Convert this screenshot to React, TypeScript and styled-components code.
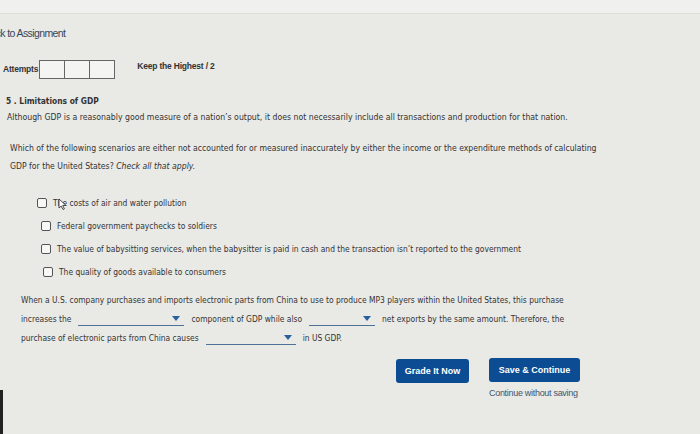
import React from "react";
import styled, { createGlobalStyle } from "styled-components";

const Global = createGlobalStyle`
  html, body { margin: 0; padding: 0; }
  body {
    background: #e9e9e6;
    width: 700px;
    height: 434px;
    overflow: hidden;
    font-family: "DejaVu Sans", "Liberation Sans", sans-serif;
    font-stretch: condensed;
    color: #2e2e2e;
  }
`;

const Page = styled.div`
  position: relative;
  width: 700px;
  height: 434px;
  display: flex;
  flex-direction: column;
`;

const TopBand = styled.div`
  height: 13px;
  background: #f0f0ee;
  border-bottom: 1px solid #dcdcd8;
`;

const BackLink = styled.a`
  margin: 12px 0 0 -16px;
  font-family: "Liberation Sans", Arial, sans-serif;
  font-stretch: normal;
  font-size: 10.5px;
  line-height: 14px;
  letter-spacing: -0.6px;
  color: #3b4656;
  text-decoration: none;
`;

const AttemptsRow = styled.div`
  margin: 20px 0 0 3px;
  display: flex;
  align-items: center;
  height: 18px;
`;

const SmallBold = styled.span`
  font-family: "Liberation Sans", Arial, sans-serif;
  font-stretch: normal;
  font-size: 8.5px;
  font-weight: bold;
  letter-spacing: -0.2px;
  color: #333;
`;

const Boxes = styled.div`
  display: flex;
  margin-left: 1px;
  border: 1px solid #666;
  height: 17px;
  background: #f4f4f2;
`;

const Box = styled.div`
  width: 24px;
  & + & { border-left: 1px solid #666; }
`;

const Keep = styled(SmallBold)`
  margin-left: 22px;
  margin-top: -6px;
`;

const Title = styled.div`
  margin: 17px 0 0 6px;
  font-size: 8.4px;
  font-weight: bold;
  line-height: 12px;
  color: #333;
`;

const Para = styled.p<{ $top: number; $lh: number; $left: number; $size: number }>`
  margin: ${(p) => p.$top}px 0 0 ${(p) => p.$left}px;
  font-size: ${(p) => p.$size}px;
  line-height: ${(p) => p.$lh}px;
  color: #333;
`;

const Options = styled.ul`
  list-style: none;
  margin: 22px 0 0 0;
  padding: 0;
  display: flex;
  flex-direction: column;
  gap: 11px;
`;

const Option = styled.li<{ $indent: number }>`
  position: relative;
  display: flex;
  align-items: center;
  gap: 6px;
  height: 12px;
  padding-left: ${(p) => p.$indent}px;
  font-size: 8.4px;
  color: #333;
`;

const Check = styled.span`
  width: 8px;
  height: 8px;
  border: 1px solid #555;
  border-radius: 2px;
  background: #f7f7f5;
`;

const Cursor = styled.svg`
  position: absolute;
  left: 58px;
  top: 1px;
`;

const Select = styled.span<{ $w: number }>`
  display: inline-block;
  position: relative;
  width: ${(p) => p.$w}px;
  height: 12px;
  margin: 0 7px;
  vertical-align: -4px;
  border-bottom: 1px solid #4d6f98;
`;

const Arrow = styled.span`
  position: absolute;
  right: 4px;
  top: 3px;
  width: 0;
  height: 0;
  border-left: 4px solid transparent;
  border-right: 4px solid transparent;
  border-top: 5px solid #2a5f9e;
`;

const ButtonRow = styled.div`
  margin: 11px 0 0 396px;
  display: flex;
  gap: 20px;
  align-items: flex-start;
`;

const Btn = styled.button<{ $w: number }>`
  width: ${(p) => p.$w}px;
  height: 24px;
  border: none;
  border-radius: 3px;
  background: #0b4c93;
  color: #fff;
  font-family: "Liberation Sans", Arial, sans-serif;
  font-size: 9px;
  font-weight: bold;
  padding: 0;
`;

const SaveCol = styled.div`
  display: flex;
  flex-direction: column;
  gap: 6px;
  margin-top: -1px;
`;

const Plain = styled.a`
  font-family: "Liberation Sans", Arial, sans-serif;
  font-stretch: normal;
  font-size: 9px;
  letter-spacing: -0.3px;
  color: #44546b;
  text-decoration: none;
`;

const Frame = styled.div`
  position: absolute;
  left: 0;
  bottom: 0;
  width: 3px;
  height: 44px;
  background: #222;
`;

export default function App() {
  return (
    <Page>
      <Global />
      <TopBand />
      <BackLink href="#">Back to Assignment</BackLink>
      <AttemptsRow>
        <SmallBold>Attempts</SmallBold>
        <Boxes>
          <Box />
          <Box />
          <Box />
        </Boxes>
        <Keep>Keep the Highest / 2</Keep>
      </AttemptsRow>
      <Title>5 . Limitations of GDP</Title>
      <Para $top={4} $lh={12} $left={7} $size={8.66}>
        Although GDP is a reasonably good measure of a nation’s output, it does not necessarily include all transactions and production for that nation.
      </Para>
      <Para $top={16} $lh={18} $left={10} $size={8.6}>
        Which of the following scenarios are either not accounted for or measured inaccurately by either the income or the expenditure methods of calculating
        <br />
        GDP for the United States? <i>Check all that apply.</i>
      </Para>
      <Options>
        <Option $indent={37}>
          <Check />
          The costs of air and water pollution
          <Cursor width="9" height="12" viewBox="0 0 9 12">
            <path d="M1 1 L1 10 L3.2 8 L5 11.5 L6.4 10.8 L4.7 7.4 L7.8 7.2 Z" fill="#fff" stroke="#222" strokeWidth="0.8" />
          </Cursor>
        </Option>
        <Option $indent={41}>
          <Check />
          Federal government paychecks to soldiers
        </Option>
        <Option $indent={41}>
          <Check />
          The value of babysitting services, when the babysitter is paid in cash and the transaction isn’t reported to the government
        </Option>
        <Option $indent={43}>
          <Check />
          The quality of goods available to consumers
        </Option>
      </Options>
      <Para $top={13} $lh={19} $left={21} $size={8.4}>
        When a U.S. company purchases and imports electronic parts from China to use to produce MP3 players within the United States, this purchase
        <br />
        increases the
        <Select $w={106}>
          <Arrow />
        </Select>
        component of GDP while also
        <Select $w={66}>
          <Arrow />
        </Select>
        net exports by the same amount. Therefore, the
        <br />
        purchase of electronic parts from China causes
        <Select $w={90}>
          <Arrow />
        </Select>
        in US GDP.
      </Para>
      <ButtonRow>
        <Btn $w={73}>Grade It Now</Btn>
        <SaveCol>
          <Btn $w={91}>Save &amp; Continue</Btn>
          <Plain href="#">Continue without saving</Plain>
        </SaveCol>
      </ButtonRow>
      <Frame />
    </Page>
  );
}
